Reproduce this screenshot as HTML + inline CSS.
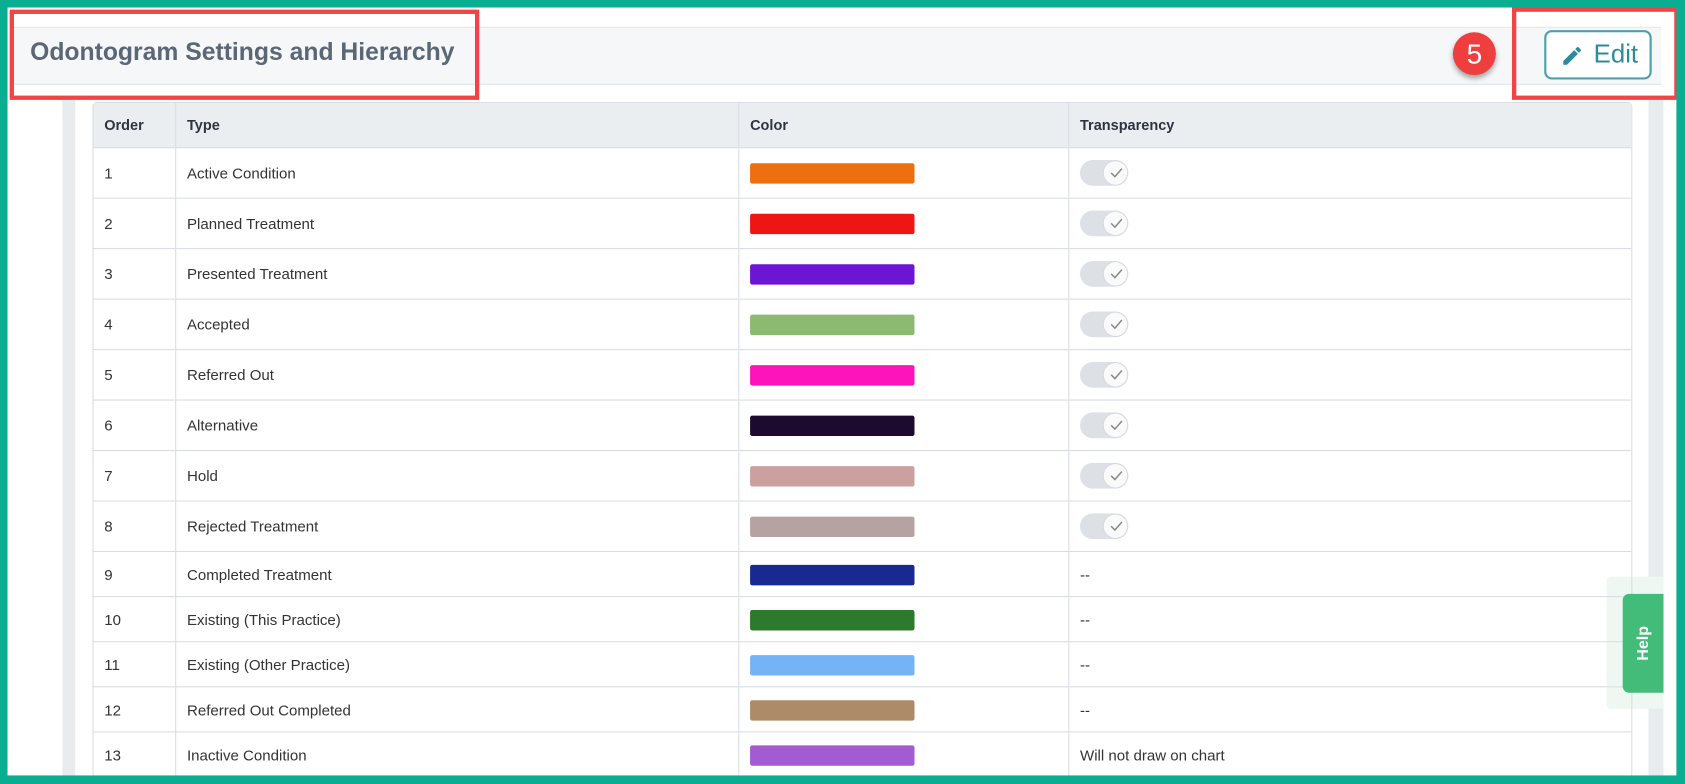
<!DOCTYPE html>
<html><head><meta charset="utf-8"><style>
html,body{margin:0;padding:0;width:1685px;height:784px;overflow:hidden;background:#fff;font-family:"Liberation Sans",sans-serif}
#w{position:absolute;left:0;top:0;width:1568px;height:730px;transform:scale(1.07462,1.0740);transform-origin:0 0;background:#fff}
.teal{position:absolute;background:#08ae8f}
.hdr{position:absolute;left:10px;top:25px;width:1536px;height:52px;background:#f5f7f9;border-top:1px solid #e6e9ec;border-bottom:1px solid #e1e5e9}
.title{position:absolute;left:28px;top:35px;font-size:23px;font-weight:bold;color:#5b6677}
.red{position:absolute;border:4px solid #f24447;box-sizing:border-box}
.badge{position:absolute;left:1352px;top:30px;width:40px;height:40px;border-radius:50%;background:#ef3e3e;color:#fff;font-size:26px;text-align:center;line-height:40px;box-shadow:0 3px 5px rgba(0,0,0,.35)}
.edit{position:absolute;left:1437px;top:28px;width:100px;height:46px;border:2px solid #4aa0ad;border-radius:7px;background:#fff;box-sizing:border-box;color:#2a8c9c;font-size:24px;line-height:42px}
.strip{position:absolute;background:#e9ecef}
table{position:absolute;left:86px;top:95px;width:1433px;border-collapse:separate;border-spacing:0;border:1px solid #d9dde3;border-radius:4px;font-size:14px;color:#333}
td,th{border-bottom:1px solid #d9dde3;border-left:1px solid #d9dde3;padding:0 10px;text-align:left}
td:first-child,th:first-child{border-left:none}
th{background:#ebeef1;height:41px;font-weight:bold;font-size:13.5px;color:#2d3440}
tr.a td{height:46px}tr.b td{height:41px}
.bar{width:153px;height:19px;border-radius:2px;margin-top:1px}
.tg{width:45px;height:24px;border-radius:12px;background:#dde1e6;position:relative}
.tg i{position:absolute;right:1px;top:1px;width:22px;height:22px;border-radius:50%;background:#fafafa;box-shadow:0 0 1px rgba(0,0,0,.2)}
.tg svg{position:absolute;right:5px;top:6px}
.help{position:absolute;left:1510px;top:553px;width:38px;height:92px;background:#44bc79;border-radius:6px 0 0 6px}
.help span{position:absolute;left:50%;top:50%;transform:translate(-50%,-50%) rotate(-90deg);color:#fff;font-weight:bold;font-size:15px}
</style></head><body><div id="w">
<div class="strip" style="left:58px;top:92px;width:12px;height:630px"></div>
<div class="strip" style="left:1534px;top:92px;width:14px;height:630px"></div>
<div class="hdr"></div>
<div class="title">Odontogram Settings and Hierarchy</div>
<div class="badge">5</div>
<div class="edit"><svg style="position:absolute;left:13px;top:11px" width="22" height="22" viewBox="0 0 24 24"><path fill="#2a8c9c" d="M3 17.25V21h3.75L17.81 9.94l-3.75-3.75L3 17.25zM20.71 7.04a1 1 0 0 0 0-1.41l-2.34-2.34a1 1 0 0 0-1.41 0l-1.83 1.83 3.75 3.75 1.83-1.83z"/></svg><span style="position:absolute;left:44px">Edit</span></div>
<div style="position:absolute;left:1495px;top:537px;width:53px;height:123px;background:#eef7f2;border-radius:4px 0 0 4px"></div>
<table>
<tr><th style="width:56px">Order</th><th style="width:503px">Type</th><th style="width:286px">Color</th><th>Transparency</th></tr>
<tr class="a"><td>1</td><td>Active Condition</td><td><div class="bar" style="background:#ee6f10"></div></td><td><div class="tg"><i></i><svg width="12" height="12" viewBox="0 0 12 12"><path d="M1 6l3.5 3.5L11 2" stroke="#888" stroke-width="1.4" fill="none"/></svg></div></td></tr>
<tr class="a"><td>2</td><td>Planned Treatment</td><td><div class="bar" style="background:#ee1515"></div></td><td><div class="tg"><i></i><svg width="12" height="12" viewBox="0 0 12 12"><path d="M1 6l3.5 3.5L11 2" stroke="#888" stroke-width="1.4" fill="none"/></svg></div></td></tr>
<tr class="a"><td>3</td><td>Presented Treatment</td><td><div class="bar" style="background:#6c15d3"></div></td><td><div class="tg"><i></i><svg width="12" height="12" viewBox="0 0 12 12"><path d="M1 6l3.5 3.5L11 2" stroke="#888" stroke-width="1.4" fill="none"/></svg></div></td></tr>
<tr class="a"><td>4</td><td>Accepted</td><td><div class="bar" style="background:#8bba70"></div></td><td><div class="tg"><i></i><svg width="12" height="12" viewBox="0 0 12 12"><path d="M1 6l3.5 3.5L11 2" stroke="#888" stroke-width="1.4" fill="none"/></svg></div></td></tr>
<tr class="a"><td>5</td><td>Referred Out</td><td><div class="bar" style="background:#fe14bb"></div></td><td><div class="tg"><i></i><svg width="12" height="12" viewBox="0 0 12 12"><path d="M1 6l3.5 3.5L11 2" stroke="#888" stroke-width="1.4" fill="none"/></svg></div></td></tr>
<tr class="a"><td>6</td><td>Alternative</td><td><div class="bar" style="background:#1c0b2e"></div></td><td><div class="tg"><i></i><svg width="12" height="12" viewBox="0 0 12 12"><path d="M1 6l3.5 3.5L11 2" stroke="#888" stroke-width="1.4" fill="none"/></svg></div></td></tr>
<tr class="a"><td>7</td><td>Hold</td><td><div class="bar" style="background:#cba09f"></div></td><td><div class="tg"><i></i><svg width="12" height="12" viewBox="0 0 12 12"><path d="M1 6l3.5 3.5L11 2" stroke="#888" stroke-width="1.4" fill="none"/></svg></div></td></tr>
<tr class="a"><td>8</td><td>Rejected Treatment</td><td><div class="bar" style="background:#b5a3a3"></div></td><td><div class="tg"><i></i><svg width="12" height="12" viewBox="0 0 12 12"><path d="M1 6l3.5 3.5L11 2" stroke="#888" stroke-width="1.4" fill="none"/></svg></div></td></tr>
<tr class="b"><td>9</td><td>Completed Treatment</td><td><div class="bar" style="background:#182a92"></div></td><td>--</td></tr>
<tr class="b"><td>10</td><td>Existing (This Practice)</td><td><div class="bar" style="background:#2c7a2c"></div></td><td>--</td></tr>
<tr class="b"><td>11</td><td>Existing (Other Practice)</td><td><div class="bar" style="background:#74b3f6"></div></td><td>--</td></tr>
<tr class="b"><td>12</td><td>Referred Out Completed</td><td><div class="bar" style="background:#ad8a68"></div></td><td>--</td></tr>
<tr class="b"><td style="border-bottom:none">13</td><td style="border-bottom:none">Inactive Condition</td><td style="border-bottom:none"><div class="bar" style="background:#a35bd2"></div></td><td style="border-bottom:none">Will not draw on chart</td></tr>
</table>
<div class="help"><span>Help</span></div>
<div class="red" style="left:9px;top:9px;width:437px;height:84px"></div>
<div class="red" style="left:1407px;top:7px;width:155px;height:86px"></div>
<div class="teal" style="left:0;top:0;width:1568px;height:7px"></div>
<div class="teal" style="left:0;top:0;width:7px;height:730px"></div>
<div class="teal" style="left:1560px;top:0;width:8px;height:730px"></div>
<div class="teal" style="left:0;top:722px;width:1568px;height:8px"></div>
</div></body></html>
